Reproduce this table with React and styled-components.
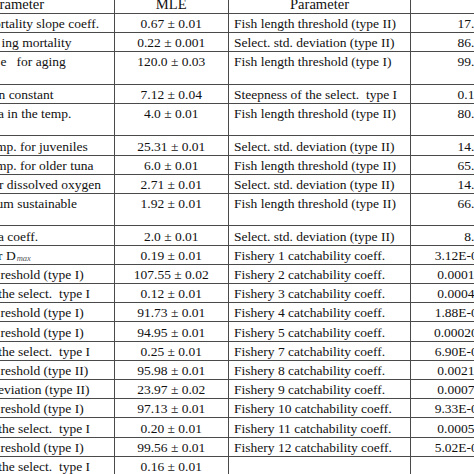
import React from 'react';
import styled, { createGlobalStyle } from 'styled-components';

const GlobalStyle = createGlobalStyle`
  html, body {
    margin: 0;
    padding: 0;
    background: #fff;
    overflow: hidden;
  }
`;

const Sheet = styled.div`
  margin-top: -4.7px;
  width: 600px;
  font-family: 'Liberation Serif', 'Times New Roman', serif;
  font-size: 13.5px;
  color: #111;
`;

const Row = styled.div`
  display: grid;
  grid-template-columns: 114.5px 114.5px 182px 162.4px;
  height: ${(p) => (p.$head ? 18.5 : p.$tall ? 32.5 : 19.2)}px;
  box-sizing: border-box;
  border-bottom: 1px solid #4a4a4a;
  font-size: ${(p) => (p.$head ? 14.6 : 13.5)}px;
  line-height: 15px;
`;

const Cell = styled.div`
  box-sizing: border-box;
  border-right: 1px solid #4a4a4a;
  overflow: hidden;
  white-space: pre;
  padding-top: ${(p) => (p.$head ? 1.8 : 2.3)}px;
`;

const NameCell = styled(Cell)`
  text-indent: ${(p) => p.$shift}px;
`;

const ValueCell = styled(Cell)`
  text-align: center;
`;

const ParamCell = styled(Cell)`
  padding-left: ${(p) => (p.$head ? 0 : 5)}px;
  text-align: ${(p) => (p.$head ? 'center' : 'left')};
`;

const Sub = styled.sub`
  font-size: 8.5px;
  font-style: italic;
  color: #555;
  vertical-align: -1px;
  margin-left: 1px;
`;

const rows = [
  { name: 'ortality slope coeff.', shift: -6, mle: '0.67 ± 0.01', param: 'Fish length threshold (type II)', value: '17.26 ± 0.01' },
  { name: 'ing mortality', shift: 1.5, mle: '0.22 ± 0.001', param: 'Select. std. deviation (type II)', value: '86.43 ± 0.01' },
  { name: 'e\u00a0\u00a0\u00a0for aging', shift: 0.5, mle: '120.0 ± 0.03', param: 'Fish length threshold (type I)', value: '99.15 ± 0.01', tall: true },
  { name: 'n constant', shift: -1.5, mle: '7.12 ± 0.04', param: 'Steepness of the select.  type I', value: '0.14 ± 0.001' },
  { name: 'a in the temp.', shift: -2, mle: '4.0 ± 0.01', param: 'Fish length threshold (type II)', value: '80.12 ± 0.01', tall: true },
  { name: 'mp. for juveniles', shift: -4, mle: '25.31 ± 0.01', param: 'Select. std. deviation (type II)', value: '14.35 ± 0.01' },
  { name: 'mp. for older tuna', shift: -4, mle: '6.0 ± 0.01', param: 'Fish length threshold (type II)', value: '65.48 ± 0.01' },
  { name: 'r dissolved oxygen', shift: -1, mle: '2.71 ± 0.01', param: 'Select. std. deviation (type II)', value: '14.02 ± 0.01' },
  { name: 'um sustainable', shift: -3.5, mle: '1.92 ± 0.01', param: 'Fish length threshold (type II)', value: '66.17 ± 0.01', tall: true },
  { name: 'a coeff.', shift: -2, mle: '2.0 ± 0.01', param: 'Select. std. deviation (type II)', value: '8.6 ± 0.01' },
  { name: 'r D', sub: 'max', shift: -1.9, mle: '0.19 ± 0.01', param: 'Fishery 1 catchability coeff.', value: '3.12E-06 ± 1.05E-07' },
  { name: 'reshold (type I)', shift: 0.5, mle: '107.55 ± 0.02', param: 'Fishery 2 catchability coeff.', value: '0.00012 ± 0.000001' },
  { name: 'the select.  type I', shift: -1.75, mle: '0.12 ± 0.01', param: 'Fishery 3 catchability coeff.', value: '0.00041 ± 0.000001' },
  { name: 'reshold (type I)', shift: 0.5, mle: '91.73 ± 0.01', param: 'Fishery 4 catchability coeff.', value: '1.88E-06 ± 1.05E-07' },
  { name: 'reshold (type I)', shift: 0.5, mle: '94.95 ± 0.01', param: 'Fishery 5 catchability coeff.', value: '0.000201 ± 0.000001' },
  { name: 'the select.  type I', shift: -1.75, mle: '0.25 ± 0.01', param: 'Fishery 7 catchability coeff.', value: '6.90E-06 ± 1.05E-07' },
  { name: 'reshold (type II)', shift: 0.5, mle: '95.98 ± 0.01', param: 'Fishery 8 catchability coeff.', value: '0.00213 ± 0.000001' },
  { name: 'eviation (type II)', shift: -2, mle: '23.97 ± 0.02', param: 'Fishery 9 catchability coeff.', value: '0.00071 ± 0.000001' },
  { name: 'reshold (type I)', shift: 0.5, mle: '97.13 ± 0.01', param: 'Fishery 10 catchability coeff.', value: '9.33E-06 ± 1.05E-07' },
  { name: 'the select.  type I', shift: -1.75, mle: '0.20 ± 0.01', param: 'Fishery 11 catchability coeff.', value: '0.00053 ± 0.000001' },
  { name: 'reshold (type I)', shift: 0.5, mle: '99.56 ± 0.01', param: 'Fishery 12 catchability coeff.', value: '5.02E-06 ± 1.05E-07' },
  { name: 'the select.  type I', shift: -1.75, mle: '0.16 ± 0.01', param: '', value: '' },
];

export default function App() {
  return (
    <>
      <GlobalStyle />
      <Sheet>
        <Row $head>
          <NameCell $head $shift={-15}>Parameter</NameCell>
          <ValueCell $head>MLE</ValueCell>
          <ParamCell $head>Parameter</ParamCell>
          <ValueCell $head>MLE</ValueCell>
        </Row>
        {rows.map((r, i) => (
          <Row key={i} $tall={r.tall}>
            <NameCell $shift={r.shift}>
              {r.name}
              {r.sub && <Sub>{r.sub}</Sub>}
            </NameCell>
            <ValueCell>{r.mle}</ValueCell>
            <ParamCell>{r.param}</ParamCell>
            <ValueCell>{r.value}</ValueCell>
          </Row>
        ))}
      </Sheet>
    </>
  );
}
